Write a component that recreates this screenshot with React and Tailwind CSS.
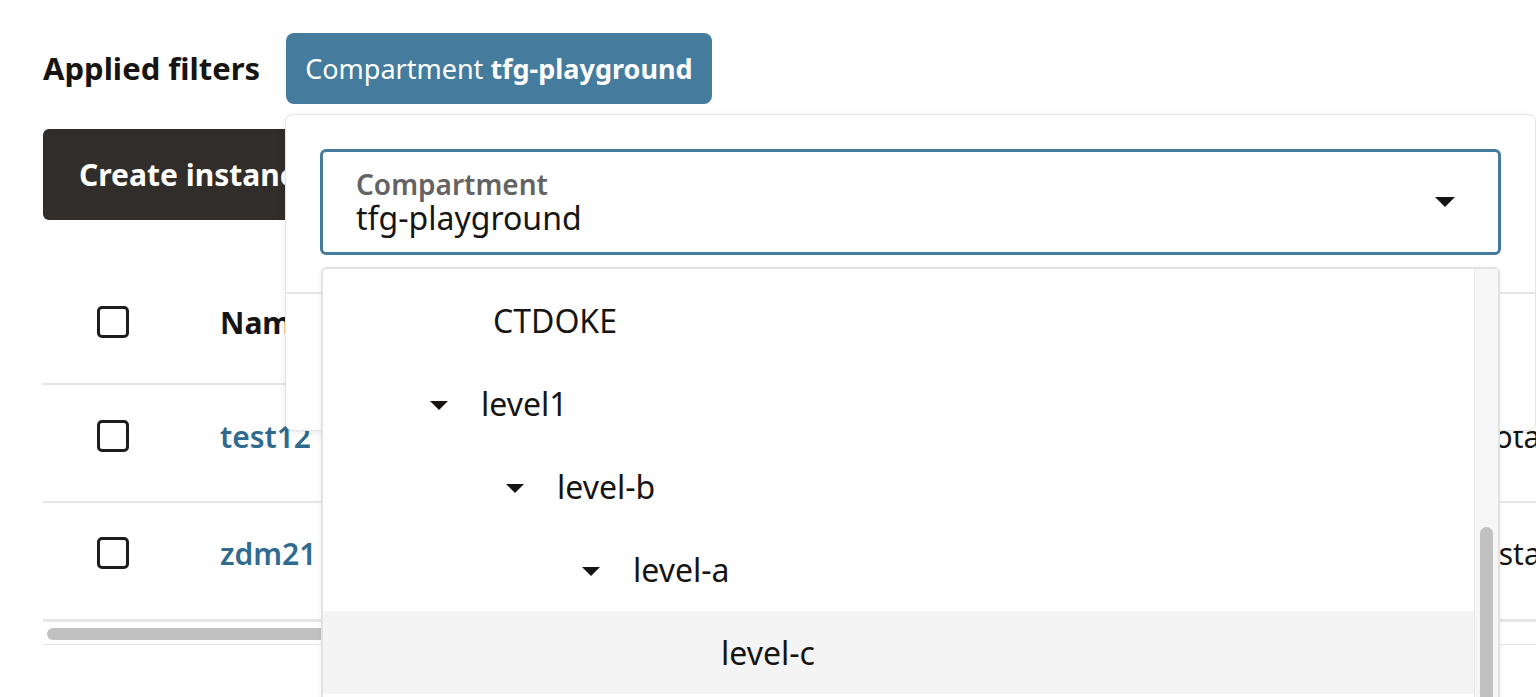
import React from "react";

// compartment tree, flattened in display order
const nodes = [
  { id: "ctdoke", label: "CTDOKE", depth: 0, leaf: true },
  { id: "level1", label: "level1", depth: 0 },
  { id: "level-b", label: "level-b", depth: 1 },
  { id: "level-a", label: "level-a", depth: 2 },
  { id: "level-c", label: "level-c", depth: 3, leaf: true, active: true },
];

const rows = [
  { name: "test12", extra: "Total", shift: "ml-0" },
  { name: "zdm21", extra: "Instance", shift: "-ml-[10px]" },
];

function Caret({ className }) {
  return (
    <svg viewBox="0 0 20 10" className={className} aria-hidden="true">
      <path d="M0 0 L20 0 L10 10 Z" fill="#161513" />
    </svg>
  );
}

function Checkbox() {
  return (
    <span className="block w-[32px] h-[32px] rounded-[5px] border-[3px] border-[#1f1d1b] bg-white" />
  );
}

function TreeRow({ node }) {
  // indent step of the tree is 76px
  const pad = node.leaf ? 170 + node.depth * 76 : 107 + node.depth * 76;
  return (
    <div
      className={`h-[83px] flex items-center text-[32px] text-[#161513] ${
        node.active ? "bg-[#f4f4f4]" : ""
      }`}
      style={{ paddingLeft: pad }}
    >
      {!node.leaf && <Caret className="w-[18px] h-[9px] mr-[33px] mt-[4px]" />}
      <span>{node.label}</span>
    </div>
  );
}

export default function App() {
  return (
    <div className="relative h-[697px] overflow-hidden bg-white font-['Noto_Sans',sans-serif] text-[#161513]">
      <div className="pl-[43px] pt-[33px]">
        {/* applied filters */}
        <div className="flex items-center gap-[26px]">
          <h2 className="text-[31px] font-bold leading-none">Applied filters</h2>
          <button className="h-[71px] px-[19px] rounded-[8px] bg-[#457b9d] text-white text-[27px] leading-none">
            Compartment <span className="font-bold">tfg-playground</span>
          </button>
        </div>

        <button className="mt-[25px] h-[91px] px-[36px] rounded-[6px] bg-[#312d2a] text-white text-[30px] font-bold leading-none">
          Create instance
        </button>

        {/* instances table */}
        <div className="mt-[51px]">
          <div className="h-[112px] flex items-start pt-[35px]">
            <div className="pl-[54px] w-[177px] shrink-0">
              <Checkbox />
            </div>
            <div className="h-[32px] flex items-center text-[30px] font-bold">Name</div>
          </div>
          {rows.map((row, i) => (
            <div
              key={row.name}
              className={`h-[118px] flex items-start border-t-2 border-[#e6e6e6] ${
                i === 0 ? "pt-[35px]" : "pt-[34px]"
              }`}
            >
              <div className="pl-[54px] w-[177px] shrink-0">
                <Checkbox />
              </div>
              <div className="w-[1260px] shrink-0 h-[32px] flex items-center text-[30px] font-semibold text-[#2f6b8f]">
                {row.name}
              </div>
              <div className={`shrink-0 h-[32px] flex items-center text-[30px] whitespace-nowrap ${row.shift}`}>
                {row.extra}
              </div>
            </div>
          ))}
          <div className="border-t-[3px] border-b border-[#e6e6e6] h-[26px] pt-[6px] pl-[4px] pr-[20px]">
            <div className="h-[12px] w-[600px] rounded-full bg-[#c1c1c1]" />
          </div>
        </div>
      </div>

      {/* filter popover */}
      <div className="absolute left-[285px] top-[114px] w-[1251px] h-[317px] rounded-[8px] border border-[#e4e4e4] bg-white shadow-[0_2px_8px_rgba(0,0,0,0.08)]">
        <div className="pl-[34px] pt-[34px]">
          <div className="w-[1181px] h-[106px] rounded-[6px] border-[3px] border-[#457b9d] flex items-center pl-[33px] pr-[43px]">
            <div className="flex-1 flex flex-col">
              <span className="text-[28px] font-semibold text-[#646262] leading-[31px]">Compartment</span>
              <span className="text-[32px] leading-[35px]">tfg-playground</span>
            </div>
            <Caret className="w-[20px] h-[10px]" />
          </div>
        </div>
        <div className="mt-[37px] border-t-2 border-[#e6e6e6]" />
      </div>

      {/* compartment tree list */}
      <div className="absolute left-[321px] top-[267px] w-[1179px] h-[460px] rounded-t-[6px] border-2 border-[#e2e2e2] bg-white shadow-[0_2px_6px_rgba(0,0,0,0.06)] flex">
        <div className="flex-1 pt-[10px]">
          {nodes.map((node) => (
            <TreeRow key={node.id} node={node} />
          ))}
        </div>
        <div className="w-[24px] bg-[#f6f6f6] border-l border-[#e8e8e8] pt-[258px] pl-[5px]">
          <div className="w-[13px] h-[300px] rounded-full bg-[#c1c1c1]" />
        </div>
      </div>
    </div>
  );
}
